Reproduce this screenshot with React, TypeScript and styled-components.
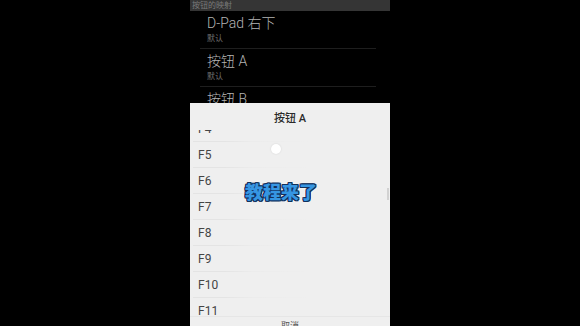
import React from 'react';
import styled, { createGlobalStyle } from 'styled-components';

const GlobalStyle = createGlobalStyle`
  html, body {
    margin: 0;
    padding: 0;
    background: #000;
    overflow: hidden;
  }
  body {
    font-family: Roboto, "Noto Sans CJK SC", sans-serif;
  }
`;

const Stage = styled.div`
  width: 580px;
  height: 326px;
  display: flex;
  justify-content: center;
  background: #000;
`;

const Phone = styled.div`
  position: relative;
  width: 200px;
  height: 326px;
  overflow: hidden;
  background: #000;
`;

const StatusBar = styled.div`
  height: 11px;
  background: #353535;
  color: #7a7a7a;
  font-size: 8px;
  line-height: 11px;
  padding-left: 2px;
`;

const List = styled.div`
  display: flex;
  flex-direction: column;
`;

const MapItem = styled.div`
  height: 37px;
  margin: 0 14px 0 10px;
  padding-left: 7px;
  border-bottom: 1px solid #1e1e1e;
  display: flex;
  flex-direction: column;
  justify-content: center;
`;

const ItemTitle = styled.div`
  color: #b4b4b4;
  font-size: 14px;
  font-weight: 300;
  line-height: 17px;
`;

const ItemSub = styled.div`
  color: #707070;
  font-size: 8px;
  line-height: 11px;
  margin-top: 1px;
`;

const Sheet = styled.div`
  position: absolute;
  left: 0;
  right: 0;
  top: 103px;
  height: 240px;
  background: #efefef;
  display: flex;
  flex-direction: column;
`;

const SheetHeader = styled.div`
  height: 27px;
  flex: none;
  display: flex;
  align-items: center;
  justify-content: center;
  color: #2a2a2a;
  font-size: 11px;
  font-weight: 500;
  background: #efefef;
  position: relative;
  z-index: 1;
`;

const KeyList = styled.div`
  height: 186px;
  flex: none;
  overflow: hidden;
  position: relative;
  border-bottom: 1px solid #e6e6e6;
`;

const KeyScroll = styled.div`
  margin-top: -14px;
  display: flex;
  flex-direction: column;
`;

const KeyRow = styled.div`
  height: 26px;
  flex: none;
  display: flex;
  align-items: center;
  padding-left: 8px;
  color: #444;
  font-size: 12px;
  position: relative;

  &::after {
    content: '';
    position: absolute;
    left: 3px;
    right: 0;
    bottom: 0;
    height: 1px;
    background: linear-gradient(to right, #e4e4e4 0, #e4e4e4 32px, #ececec 60px, #efefef 120px);
  }
`;

const ScrollThumb = styled.div`
  position: absolute;
  right: 1px;
  top: 58px;
  width: 2px;
  height: 12px;
  background: #d2d2d2;
`;

const CancelButton = styled.div`
  height: 26px;
  flex: none;
  display: flex;
  align-items: flex-start;
  justify-content: center;
  padding-top: 2px;
  color: #555;
  font-size: 9px;
`;

const TouchDot = styled.div`
  position: absolute;
  left: 81px;
  top: 144px;
  width: 10px;
  height: 10px;
  border-radius: 50%;
  background: #fff;
  box-shadow: 0 0 2px rgba(0, 0, 0, 0.12);
`;

const Caption = styled.div`
  position: absolute;
  left: 55px;
  top: 179px;
  font-family: "Noto Sans CJK SC", sans-serif;
  font-weight: 900;
  font-size: 18px;
  line-height: 24px;
  color: #3696e2;
  text-shadow:
    1px 0 0 #12305a, -1px 0 0 #12305a, 0 1px 0 #12305a, 0 -1px 0 #12305a,
    1px 1px 0 #12305a, -1px -1px 0 #12305a, 1px -1px 0 #12305a, -1px 1px 0 #12305a,
    0 0 3px #fff, 0 0 3px #fff;
`;

const mappings = ['D-Pad 右下', '按钮 A', '按钮 B'];
const keys = ['F4', 'F5', 'F6', 'F7', 'F8', 'F9', 'F10', 'F11'];

export default function App() {
  return (
    <Stage>
      <GlobalStyle />
      <Phone>
        <StatusBar>按钮的映射</StatusBar>
        <List>
          {mappings.map((m) => (
            <MapItem key={m}>
              <ItemTitle>{m}</ItemTitle>
              <ItemSub>默认</ItemSub>
            </MapItem>
          ))}
        </List>
        <Sheet>
          <SheetHeader>按钮 A</SheetHeader>
          <KeyList>
            <KeyScroll>
              {keys.map((k) => (
                <KeyRow key={k}>{k}</KeyRow>
              ))}
            </KeyScroll>
            <ScrollThumb />
          </KeyList>
          <CancelButton>取消</CancelButton>
        </Sheet>
        <TouchDot />
        <Caption>教程来了</Caption>
      </Phone>
    </Stage>
  );
}
